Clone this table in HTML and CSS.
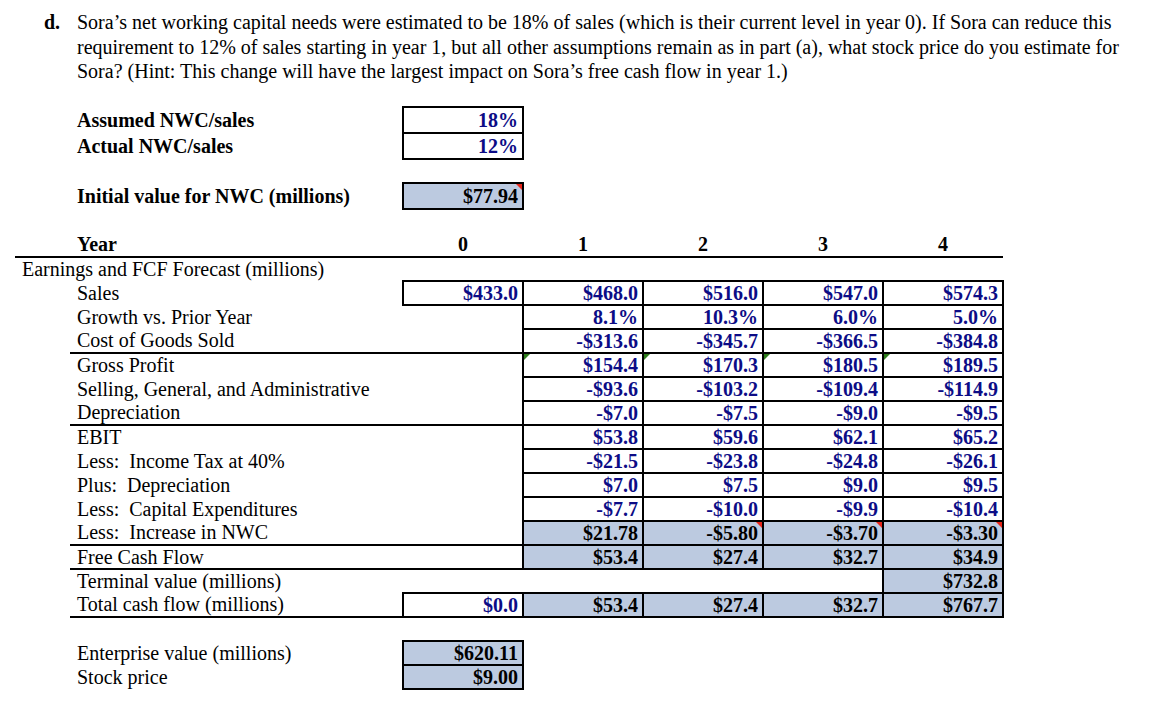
FILE: index.html
```html
<!DOCTYPE html>
<html lang="en">
<head>
<meta charset="utf-8">
<title>Sora FCF valuation – part d</title>
<link rel="stylesheet" href="styles.css">
</head>
<body>
<div class="page">
  <p class="question"><span class="qlabel">d.</span><span class="qtext">Sora’s net working capital needs were estimated to be 18% of sales (which is their current level in year 0). If Sora can reduce this<br>requirement to 12% of sales starting in year 1, but all other assumptions remain as in part (a), what stock price do you estimate for<br>Sora? (Hint: This change will have the largest impact on Sora’s free cash flow in year 1.)</span></p>

  <table class="sheet">
    <colgroup>
      <col class="col-indent">
      <col class="col-label">
      <col class="col-num"><col class="col-num"><col class="col-num"><col class="col-num"><col class="col-num">
    </colgroup>
    <tbody>
      <tr class="tall">
        <td></td><td class="lbl strong">Assumed NWC/sales</td>
        <td class="num box">18%</td><td></td><td></td><td></td><td></td>
      </tr>
      <tr class="tall">
        <td></td><td class="lbl strong">Actual NWC/sales</td>
        <td class="num box">12%</td><td></td><td></td><td></td><td></td>
      </tr>
      <tr class="gap"><td colspan="7"></td></tr>
      <tr class="tall">
        <td></td><td class="lbl strong">Initial value for NWC (millions)</td>
        <td class="num box fill k note">$77.94</td><td></td><td></td><td></td><td></td>
      </tr>
      <tr class="gap"><td colspan="7"></td></tr>
      <tr class="year">
        <td></td><td class="lbl strong">Year</td>
        <td class="yr">0</td><td class="yr">1</td><td class="yr">2</td><td class="yr">3</td><td class="yr">4</td>
      </tr>
      <tr>
        <td colspan="2" class="lbl head">Earnings and FCF Forecast (millions)</td>
        <td></td><td></td><td></td><td></td><td></td>
      </tr>
      <tr>
        <td></td><td class="lbl">Sales</td>
        <td class="num box">$433.0</td><td class="num box">$468.0</td><td class="num box">$516.0</td><td class="num box">$547.0</td><td class="num box">$574.3</td>
      </tr>
      <tr>
        <td></td><td class="lbl">Growth vs. Prior Year</td>
        <td></td><td class="num box">8.1%</td><td class="num box">10.3%</td><td class="num box">6.0%</td><td class="num box">5.0%</td>
      </tr>
      <tr class="under">
        <td></td><td class="lbl">Cost of Goods Sold</td>
        <td></td><td class="num box">-$313.6</td><td class="num box">-$345.7</td><td class="num box">-$366.5</td><td class="num box">-$384.8</td>
      </tr>
      <tr>
        <td></td><td class="lbl">Gross Profit</td>
        <td></td><td class="num box flag">$154.4</td><td class="num box flag">$170.3</td><td class="num box flag">$180.5</td><td class="num box flag">$189.5</td>
      </tr>
      <tr>
        <td></td><td class="lbl">Selling, General, and Administrative</td>
        <td></td><td class="num box">-$93.6</td><td class="num box">-$103.2</td><td class="num box">-$109.4</td><td class="num box">-$114.9</td>
      </tr>
      <tr class="under">
        <td></td><td class="lbl">Depreciation</td>
        <td></td><td class="num box">-$7.0</td><td class="num box">-$7.5</td><td class="num box">-$9.0</td><td class="num box">-$9.5</td>
      </tr>
      <tr>
        <td></td><td class="lbl">EBIT</td>
        <td></td><td class="num box">$53.8</td><td class="num box">$59.6</td><td class="num box">$62.1</td><td class="num box">$65.2</td>
      </tr>
      <tr>
        <td></td><td class="lbl">Less:  Income Tax at 40%</td>
        <td></td><td class="num box">-$21.5</td><td class="num box">-$23.8</td><td class="num box">-$24.8</td><td class="num box">-$26.1</td>
      </tr>
      <tr>
        <td></td><td class="lbl">Plus:  Depreciation</td>
        <td></td><td class="num box">$7.0</td><td class="num box">$7.5</td><td class="num box">$9.0</td><td class="num box">$9.5</td>
      </tr>
      <tr>
        <td></td><td class="lbl">Less:  Capital Expenditures</td>
        <td></td><td class="num box">-$7.7</td><td class="num box">-$10.0</td><td class="num box">-$9.9</td><td class="num box">-$10.4</td>
      </tr>
      <tr class="under">
        <td></td><td class="lbl">Less:  Increase in NWC</td>
        <td></td><td class="num box fill k">$21.78</td><td class="num box fill k note">-$5.80</td><td class="num box fill k note">-$3.70</td><td class="num box fill k note">-$3.30</td>
      </tr>
      <tr class="under">
        <td></td><td class="lbl">Free Cash Flow</td>
        <td></td><td class="num box fill k">$53.4</td><td class="num box fill k">$27.4</td><td class="num box fill k">$32.7</td><td class="num box fill k">$34.9</td>
      </tr>
      <tr>
        <td></td><td class="lbl">Terminal value (millions)</td>
        <td></td><td></td><td></td><td></td><td class="num box fill k">$732.8</td>
      </tr>
      <tr class="under">
        <td></td><td class="lbl">Total cash flow (millions)</td>
        <td class="num box">$0.0</td><td class="num box fill k">$53.4</td><td class="num box fill k">$27.4</td><td class="num box fill k">$32.7</td><td class="num box fill k">$767.7</td>
      </tr>
      <tr class="gap"><td colspan="7"></td></tr>
      <tr>
        <td></td><td class="lbl">Enterprise value (millions)</td>
        <td class="num box fill k">$620.11</td><td></td><td></td><td></td><td></td>
      </tr>
      <tr>
        <td></td><td class="lbl">Stock price</td>
        <td class="num box fill k">$9.00</td><td></td><td></td><td></td><td></td>
      </tr>
    </tbody>
  </table>
</div>
</body>
</html>
```

FILE: styles.css
```css
* {
  box-sizing: border-box;
}

html, body {
  margin: 0;
  background: #ffffff;
}

body {
  font-family: "Liberation Serif", "Times New Roman", Times, serif;
  color: #000000;
  font-size: 20px;
}

.page {
  display: flex;
  flex-direction: column;
  align-items: flex-start;
  padding: 10px 0 0 15px;
}

.question {
  margin: 0 0 0 29px;
  display: flex;
  font-size: 20px;
  line-height: 24.5px;
  white-space: nowrap;
}

.qlabel {
  flex: none;
  width: 33px;
  font-weight: bold;
}

.sheet {
  margin-top: 22px;
  border-collapse: collapse;
  table-layout: fixed;
  width: 988px;
  font-size: 20px;
}

.col-indent { width: 55px; }
.col-label { width: 333px; }
.col-num { width: 120px; }

.sheet td {
  height: 24px;
  padding: 0 4px 0 0;
  line-height: 22px;
  vertical-align: middle;
  white-space: pre;
  position: relative;
}

.sheet tr.tall td {
  height: 26px;
}

.sheet tr.gap td {
  height: 24px;
}

.lbl {
  padding-left: 7px !important;
  text-align: left;
}

.strong {
  font-weight: bold;
}

.num {
  text-align: right;
  font-weight: bold;
  color: #0c0c86;
}

.yr {
  text-align: center;
  font-weight: bold;
  padding: 0 !important;
}

.box {
  border: 2px solid #000000;
}

.fill {
  background: #bccae0;
}

.k {
  color: #000000;
}

.year td {
  border-bottom: 2px solid #000000;
}

.under td:not(:first-child) {
  border-bottom: 2px solid #000000;
}

/* red comment marker, top-right corner */
.note::after {
  content: "";
  position: absolute;
  top: 0;
  right: 0;
  width: 0;
  height: 0;
  border-top: 6px solid #e8261a;
  border-left: 6px solid transparent;
}

/* green formula marker, top-left corner */
.flag::before {
  content: "";
  position: absolute;
  top: 0;
  left: 0;
  width: 0;
  height: 0;
  border-top: 6px solid #2e7d1c;
  border-right: 6px solid transparent;
}
```
